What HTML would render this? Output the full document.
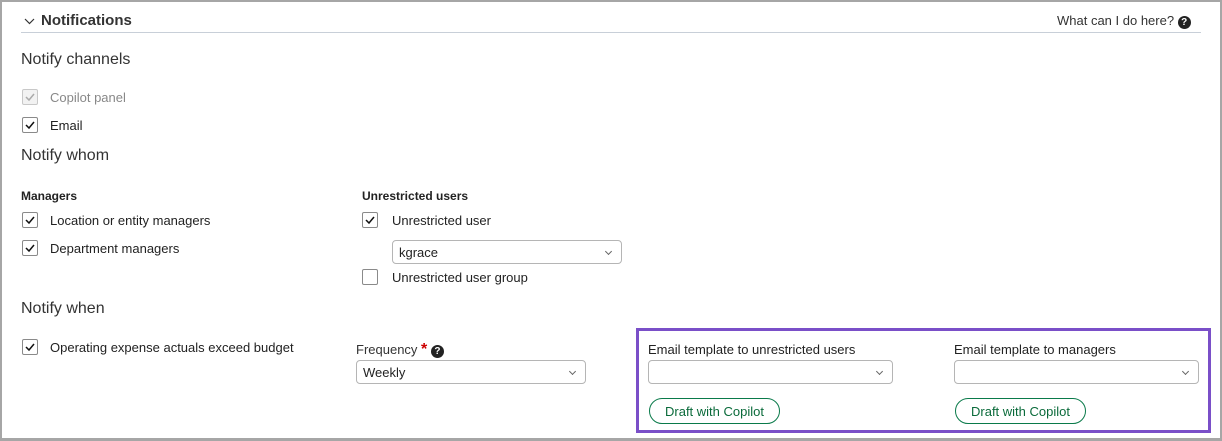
<!DOCTYPE html>
<html><head><style>
*{box-sizing:border-box;margin:0;padding:0}
body{width:1222px;height:441px;background:#fff;font-family:"Liberation Sans",sans-serif;color:#222;position:relative;overflow:hidden}
.frame{position:absolute;left:0;top:0;width:1222px;height:441px;border:2px solid #a6a6a6;border-bottom-width:3px}
.a{position:absolute;white-space:nowrap}
.h{font-size:16px;color:#333}
.l{font-size:13px}
.cb{position:absolute;width:16px;height:16px;border:1px solid #8a8a8a;border-radius:2px;background:#fff}
.cb svg{position:absolute;left:2px;top:2px}
.sel{position:absolute;height:24px;border:1px solid #b5b5b5;border-radius:4px;background:#fff;font-size:13px;padding:4px 6px}
.sel:after{content:"";position:absolute;right:10px;top:8px;width:4px;height:4px;border-right:1px solid #666;border-bottom:1px solid #666;transform:rotate(45deg)}
.btn{position:absolute;height:26px;border:1px solid #0a7a4a;border-radius:13px;color:#0a6a3a;font-size:13px;padding:5px 15px}
.q{display:inline-block;width:13px;height:13px;border-radius:50%;background:#222;color:#fff;font-size:10px;font-weight:bold;text-align:center;line-height:13px;vertical-align:-1px;position:relative;top:-1px}
</style></head><body>
<div class="frame"></div>
<div class="a" style="left:24px;top:12px;font-size:15px;font-weight:bold;color:#333">
<svg width="11" height="8" style="margin-right:6px;vertical-align:0px"><path d="M1 2 L5.5 6.5 L10 2" stroke="#333" stroke-width="1.2" fill="none"/></svg>Notifications</div>
<div class="a" style="left:1057px;top:13px;font-size:13px;color:#333">What can I do here? <span class="q">?</span></div>
<div class="a" style="left:21px;top:32px;width:1180px;height:1px;background:#c8cfd8"></div>

<div class="a h" style="left:21px;top:51px">Notify channels</div>
<div class="cb" style="left:22px;top:89px;border-color:#c8c8c8;background:#f2f2f2"><svg width="10" height="10"><path d="M1 5 L4 8 L9 2" stroke="#aaa" stroke-width="1.5" fill="none"/></svg></div>
<div class="a l" style="left:50px;top:90px;color:#888">Copilot panel</div>
<div class="cb" style="left:22px;top:117px"><svg width="10" height="10"><path d="M1 5 L4 8 L9 2" stroke="#111" stroke-width="1.5" fill="none"/></svg></div>
<div class="a l" style="left:50px;top:118px">Email</div>

<div class="a h" style="left:21px;top:147px">Notify whom</div>
<div class="a" style="left:21px;top:189px;font-size:12px;font-weight:bold">Managers</div>
<div class="cb" style="left:22px;top:212px"><svg width="10" height="10"><path d="M1 5 L4 8 L9 2" stroke="#111" stroke-width="1.5" fill="none"/></svg></div>
<div class="a l" style="left:50px;top:213px">Location or entity managers</div>
<div class="cb" style="left:22px;top:240px"><svg width="10" height="10"><path d="M1 5 L4 8 L9 2" stroke="#111" stroke-width="1.5" fill="none"/></svg></div>
<div class="a l" style="left:50px;top:241px">Department managers</div>

<div class="a" style="left:362px;top:189px;font-size:12px;font-weight:bold">Unrestricted users</div>
<div class="cb" style="left:362px;top:212px"><svg width="10" height="10"><path d="M1 5 L4 8 L9 2" stroke="#111" stroke-width="1.5" fill="none"/></svg></div>
<div class="a l" style="left:392px;top:213px">Unrestricted user</div>
<div class="sel" style="left:392px;top:240px;width:230px">kgrace</div>
<div class="cb" style="left:362px;top:269px"></div>
<div class="a l" style="left:392px;top:270px">Unrestricted user group</div>

<div class="a h" style="left:21px;top:300px">Notify when</div>
<div class="cb" style="left:22px;top:339px"><svg width="10" height="10"><path d="M1 5 L4 8 L9 2" stroke="#111" stroke-width="1.5" fill="none"/></svg></div>
<div class="a l" style="left:50px;top:340px">Operating expense actuals exceed budget</div>

<div class="a l" style="left:356px;top:341px;color:#333">Frequency <span style="color:#c00;font-size:16px;font-weight:bold">*</span> <span class="q">?</span></div>
<div class="sel" style="left:356px;top:360px;width:230px">Weekly</div>

<div class="a" style="left:636px;top:328px;width:575px;height:105px;border:3px solid #7a4fc8"></div>
<div class="a l" style="left:648px;top:342px">Email template to unrestricted users</div>
<div class="sel" style="left:648px;top:360px;width:245px"></div>
<div class="btn" style="left:649px;top:398px">Draft with Copilot</div>
<div class="a l" style="left:954px;top:342px">Email template to managers</div>
<div class="sel" style="left:954px;top:360px;width:245px"></div>
<div class="btn" style="left:955px;top:398px">Draft with Copilot</div>
</body></html>
